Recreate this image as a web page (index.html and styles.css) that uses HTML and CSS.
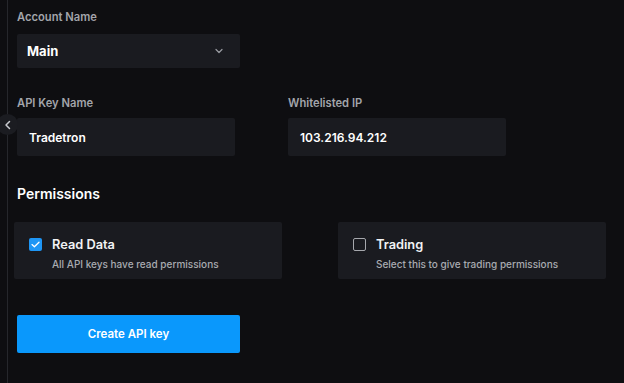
FILE: index.html
```html
<!DOCTYPE html>
<html>
<head>
<meta charset="utf-8">
<link rel="stylesheet" href="styles.css">
</head>
<body>
<div class="panel">
  <button class="collapse" aria-label="collapse">
    <svg width="8" height="10" viewBox="0 0 8 10"><path d="M5.5 1.5 L2 5 L5.5 8.5" fill="none" stroke="#c9cbd0" stroke-width="1.5" stroke-linecap="round" stroke-linejoin="round"/></svg>
  </button>
  <div class="content">
    <div class="field field-account">
      <label class="label">Account Name</label>
      <div class="select">
        <span class="select-value">Main</span>
        <svg class="chev" width="8" height="6" viewBox="0 0 8 6"><path d="M1 1.5 L4 4.5 L7 1.5" fill="none" stroke="#9a9ca2" stroke-width="1.2" stroke-linecap="round" stroke-linejoin="round"/></svg>
      </div>
    </div>
    <div class="row">
      <div class="field field-key">
        <label class="label">API Key Name</label>
        <div class="input">Tradetron</div>
      </div>
      <div class="field field-ip">
        <label class="label">Whitelisted IP</label>
        <div class="input">103.216.94.212</div>
      </div>
    </div>
    <h2 class="heading">Permissions</h2>
    <div class="cards">
      <div class="card">
        <span class="check checked">
          <svg width="9" height="7" viewBox="0 0 9 7"><path d="M1 3.6 L3.4 5.8 L8 1.2" fill="none" stroke="#fff" stroke-width="1.3" stroke-linecap="round" stroke-linejoin="round"/></svg>
        </span>
        <div class="card-text">
          <div class="card-title">Read Data</div>
          <div class="card-sub">All API keys have read permissions</div>
        </div>
      </div>
      <div class="card">
        <span class="check"></span>
        <div class="card-text">
          <div class="card-title">Trading</div>
          <div class="card-sub">Select this to give trading permissions</div>
        </div>
      </div>
    </div>
    <button class="create">Create API key</button>
  </div>
</div>
</body>
</html>
```
FILE: styles.css
```css
html, body {
  margin: 0;
  padding: 0;
  background: #0e0e11;
  height: 100%;
}
body {
  font-family: Inter, "Noto Sans", sans-serif;
  color: #ffffff;
}
.panel {
  position: relative;
  margin-left: 7px;
  border-left: 1px solid #26272c;
  min-height: 383px;
  box-sizing: border-box;
}
.collapse {
  position: absolute;
  left: -11px;
  top: 114px;
  width: 21px;
  height: 21px;
  border-radius: 50%;
  border: none;
  background: #1b1c21;
  padding: 0;
  display: flex;
  align-items: center;
  justify-content: center;
}
.content {
  padding: 9px 0 0 9px;
  display: flex;
  flex-direction: column;
}
.field {
  display: flex;
  flex-direction: column;
}
.label {
  font-size: 11.2px;
  line-height: 16px;
  color: #a3a5ab;
  font-weight: 600;
}
.field-account .label { margin-bottom: 9px; }
.select {
  width: 223px;
  height: 34px;
  box-sizing: border-box;
  background: #1a1b20;
  border-radius: 2px;
  display: flex;
  align-items: center;
  justify-content: space-between;
  padding: 0 17px 0 10px;
}
.select-value {
  font-size: 13px;
  font-weight: 700;
}
.row {
  display: flex;
  gap: 53px;
  margin-top: 27px;
}
.row .label { margin-bottom: 7px; }
.input {
  width: 218px;
  height: 38px;
  box-sizing: border-box;
  background: #1a1b20;
  border-radius: 2px;
  display: flex;
  align-items: center;
  padding-left: 12px;
  font-size: 12px;
  font-weight: 600;
}
.heading {
  margin: 28px 0 0 0;
  font-size: 14px;
  line-height: 20px;
  font-weight: 600;
}
.cards {
  display: flex;
  gap: 56px;
  margin: 18px 0 0 -3px;
}
.card {
  width: 268px;
  height: 57px;
  box-sizing: border-box;
  background: #1a1b20;
  border-radius: 2px;
  display: flex;
  align-items: flex-start;
  padding: 15px 0 0 15px;
  gap: 10px;
}
.check {
  width: 13px;
  height: 13px;
  box-sizing: border-box;
  border-radius: 2px;
  border: 1.5px solid #a6a8ad;
  margin-top: 1px;
  flex: none;
  display: flex;
  align-items: center;
  justify-content: center;
}
.check.checked {
  background: #1e96f5;
  border: none;
}
.card-text {
  display: flex;
  flex-direction: column;
}
.card-title {
  font-size: 12.8px;
  line-height: 16px;
  font-weight: 600;
  color: #f2f3f5;
}
.card-sub {
  font-size: 10px;
  line-height: 14px;
  margin-top: 4px;
  color: #a9abb1;
  font-weight: 500;
}
.create {
  margin-top: 36px;
  width: 223px;
  height: 38px;
  border: none;
  border-radius: 2px;
  background: #0a98fc;
  color: #ffffff;
  font-family: Inter, "Noto Sans", sans-serif;
  font-size: 11.5px;
  font-weight: 600;
}
```
